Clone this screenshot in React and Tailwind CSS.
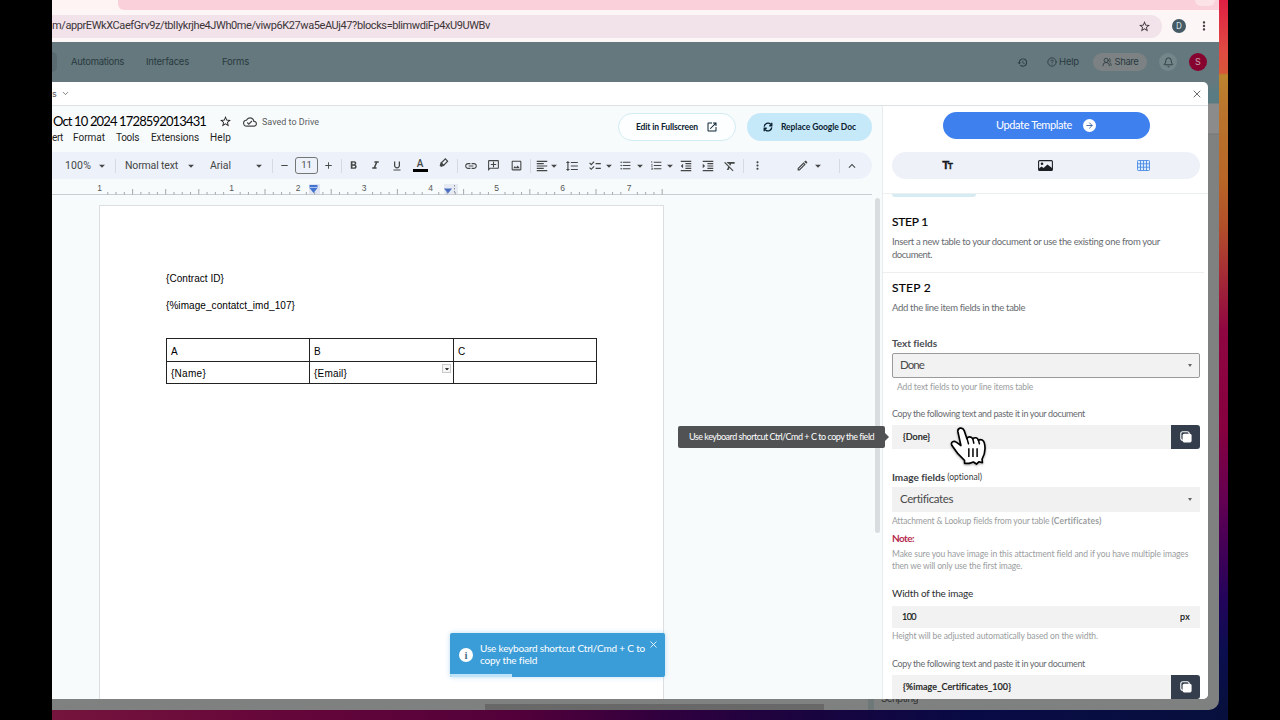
import React, { useLayoutEffect, useRef, useState } from "react";
import {
  MdAdd, MdRemove, MdFormatBold, MdFormatItalic, MdFormatUnderlined, MdInsertLink, MdOutlineAddComment,
  MdOutlineImage, MdFormatAlignLeft, MdFormatLineSpacing, MdChecklist, MdFormatListBulleted,
  MdFormatListNumbered, MdFormatIndentDecrease, MdFormatIndentIncrease, MdFormatClear, MdMoreVert,
  MdOutlineEdit, MdKeyboardArrowUp, MdArrowDropDown, MdStarBorder, MdOutlineCloudDone, MdHistory,
  MdOpenInNew,
} from "react-icons/md";
import { Bell, ChevronDown, CircleHelp, UsersRound, X, ArrowRight } from "lucide-react";

/* A single line of text whose tracking is adjusted so that it spans `w` pixels. */
function Fit({ w, className = "", children }) {
  const ref = useRef(null);
  const [spacing, setSpacing] = useState(0);
  useLayoutEffect(() => {
    const natural = ref.current.getBoundingClientRect().width;
    setSpacing((w - natural) / String(children).length);
  }, [w, children]);
  return (
    <span ref={ref} className={"inline-block shrink-0 whitespace-pre " + className} style={{ letterSpacing: spacing }}>
      {children}
    </span>
  );
}

const Cell = ({ className, children }) => (
  <div className={"flex h-full shrink-0 items-center justify-center " + className}>{children}</div>
);
const Sep = ({ className }) => (
  <Cell className={className}>
    <div className="h-3.5 w-px shrink-0 bg-[#d6dae2]" />
  </Cell>
);
const Drop = ({ className }) => (
  <Cell className={className}>
    <MdArrowDropDown className="size-3.5 shrink-0" />
  </Cell>
);

function BrowserChrome() {
  return (
    <div className="shrink-0">
      <div className="flex h-[10px] bg-[#fff4f4] pl-[66px]">
        <div className="flex flex-1 justify-end rounded-bl-md bg-[#fad1da] pr-1">
          <div className="h-[6px] w-5 rounded-b-full bg-[#fce3e8]" />
        </div>
      </div>
      <div className="flex h-8 items-center bg-[#fdf6f7]">
        <div className="flex h-[23px] w-[1110px] items-center justify-between rounded-r-full bg-[#f1e3e9] pr-[11px] text-[#3d3539]">
          <Fit w={438} className="pt-px font-[Roboto] text-[11px]">m/apprEWkXCaefGrv9z/tblIykrjhe4JWh0me/viwp6K27wa5eAUj47?blocks=blimwdiFp4xU9UWBv</Fit>
          <MdStarBorder className="size-[13px]" />
        </div>
        <div className="ml-[10px] flex size-[14px] items-center justify-center rounded-full bg-[#455a64] text-[8px] text-[#d5e3ea]">D</div>
        <MdMoreVert className="ml-[11px] size-[14px] text-[#463c40]" />
      </div>
    </div>
  );
}

function BaseBar() {
  return (
    <div className="flex h-10 shrink-0 items-center justify-between bg-[#64787d] pr-[12px] font-[Inter] text-[#2a3a40]">
      <div className="flex items-center text-[9.5px]">
        <div className="h-5 w-[5px] rounded-r-full bg-[#5a6c71]" />
        <Fit w={53} className="ml-[14px]">Automations</Fit>
        <Fit w={43} className="ml-[22px]">Interfaces</Fit>
        <Fit w={27} className="ml-[33px]">Forms</Fit>
      </div>
      <div className="flex items-center">
        <MdHistory className="size-[11px]" />
        <CircleHelp className="ml-[19px] size-[10px]" />
        <Fit w={20} className="ml-[2px] pt-px text-[9.5px]">Help</Fit>
        <div className="ml-[14px] flex h-[18px] w-[54px] items-center justify-center gap-[3px] rounded-full bg-[#7c8284]">
          <UsersRound className="size-[10px]" />
          <Fit w={24} className="text-[9.5px]">Share</Fit>
        </div>
        <div className="ml-3 flex size-[18px] items-center justify-center rounded-full bg-[#75868a]">
          <Bell className="size-[11px]" />
        </div>
        <div className="ml-3 flex size-[18px] items-center justify-center rounded-full bg-[#86022f] text-[9px] text-[#c6a2ae]">S</div>
      </div>
    </div>
  );
}

function DocHeader() {
  return (
    <div className="flex h-[46px] shrink-0 justify-between pr-[10px] text-[#1f1f1f]">
      <div>
        <div className="mt-[7px] flex h-[18px] items-center">
          <Fit w={153} className="ml-px font-[Lato] text-[13px] text-black">Oct 10 2024 1728592013431</Fit>
          <MdStarBorder className="mb-[2px] ml-[13px] size-[13px]" />
          <MdOutlineCloudDone className="mb-px ml-[11px] size-[14px] text-[#444746]" />
          <Fit w={57} className="ml-[5px] pt-px font-[Roboto] text-[9px] text-[#5a5d5f]">Saved to Drive</Fit>
        </div>
        <div className="-mt-[2px] flex h-4 items-center font-[Roboto] text-[10px]">
          <Fit w={11}>ert</Fit>
          <Fit w={32} className="ml-[10px]">Format</Fit>
          <Fit w={23} className="ml-[11px]">Tools</Fit>
          <Fit w={48} className="ml-[12px]">Extensions</Fit>
          <Fit w={21} className="ml-[11px]">Help</Fit>
        </div>
      </div>
      <div className="mt-[7px] flex h-[28px] gap-[11px] font-[Lato] text-[8.5px] font-bold text-[#0b2230]">
        <div className="flex w-[118px] items-center justify-center gap-[8px] rounded-full border border-[#d2ecf3] bg-[#fcfeff]">
          <Fit w={62}>Edit in Fullscreen</Fit>
          <MdOpenInNew className="size-[12px]" />
        </div>
        <div className="flex w-[125px] items-center justify-center gap-[8px] rounded-full bg-[#c6e9fa]">
          <svg viewBox="0 0 24 24" className="size-[10px]" fill="none" stroke="currentColor" strokeWidth="3.2">
            <path d="M3 11a9 9 0 0 1 15-6l3 3M21 13a9 9 0 0 1-15 6l-3-3" />
            <path d="M21 2v7h-6M3 22v-7h6" />
          </svg>
          <Fit w={75}>Replace Google Doc</Fit>
        </div>
      </div>
    </div>
  );
}

function Toolbar() {
  return (
    <div className="mr-[10px] flex h-[27px] shrink-0 items-center rounded-r-full bg-[#edf1f9] font-[Roboto] text-[10.5px] text-[#444746]">
      <div className="w-[39px] shrink-0 pl-[13px]"><Fit w={26}>100%</Fit></div>
      <Drop className="w-[22px]" />
      <Sep className="w-1" />
      <div className="w-[65px] shrink-0 pl-2"><Fit w={53}>Normal text</Fit></div>
      <Drop className="w-[18px]" />
      <div className="w-[47px] shrink-0 pl-[10px]"><Fit w={21}>Arial</Fit></div>
      <Drop className="w-6" />
      <Sep className="w-0.5" />
      <Cell className="w-[22px]"><MdRemove className="size-[11px]" /></Cell>
      <div className="flex h-[17px] w-[23px] shrink-0 items-center justify-center rounded-[3px] border border-[#747775] text-[9.5px]">11</div>
      <Cell className="w-5"><MdAdd className="size-[11px]" /></Cell>
      <Sep className="w-1.5" />
      <Cell className="mr-0.5 w-[18px]"><MdFormatBold className="size-[13px] shrink-0" /></Cell>
      <Cell className="w-[22px]"><MdFormatItalic className="size-[13px]" /></Cell>
      <Cell className="w-[22px]"><MdFormatUnderlined className="size-[12px]" /></Cell>
      <Cell className="w-6 flex-col">
        <span className="text-[10px] leading-[10px] font-medium">A</span>
        <span className="h-[2.5px] w-[15px] bg-black" />
      </Cell>
      <Cell className="w-[22px]">
        <svg viewBox="0 0 24 24" className="mb-1 size-[11px]" fill="none" stroke="currentColor" strokeWidth="2.6">
          <path d="M7 11 16 2l5 5-9 9-5-5Z" />
          <path d="m7 11-2 5 2 2 5-2Z" fill="currentColor" />
        </svg>
      </Cell>
      <Sep className="w-1.5" />
      <Cell className="w-[22px]"><MdInsertLink className="size-[14px]" /></Cell>
      <Cell className="w-[22px]"><MdOutlineAddComment className="size-[13px] -scale-x-100" /></Cell>
      <Cell className="ml-px w-[22px]"><MdOutlineImage className="size-[13px]" /></Cell>
      <Sep className="w-1.5" />
      <Cell className="w-[18px]"><MdFormatAlignLeft className="size-[14px] shrink-0" /></Cell>
      <Drop className="w-1.5" />
      <Cell className="ml-1 w-[22px]"><MdFormatLineSpacing className="size-[14px]" /></Cell>
      <Cell className="ml-px w-[22px]"><MdChecklist className="size-[14px]" /></Cell>
      <Drop className="w-1.5" />
      <Cell className="ml-0.5 w-[22px]"><MdFormatListBulleted className="size-[13px]" /></Cell>
      <Drop className="ml-px w-1.5" />
      <Cell className="ml-0.5 w-[22px]"><MdFormatListNumbered className="size-[13px]" /></Cell>
      <Drop className="w-1.5" />
      <Cell className="ml-0.5 w-[22px]"><MdFormatIndentDecrease className="size-[14px]" /></Cell>
      <Cell className="w-[22px]"><MdFormatIndentIncrease className="size-[14px]" /></Cell>
      <Cell className="w-[22px]"><MdFormatClear className="size-[14px]" /></Cell>
      <Sep className="w-1" />
      <Cell className="ml-px w-[22px]"><MdMoreVert className="size-[13px]" /></Cell>
      <Cell className="ml-[23px] w-[22px]"><MdOutlineEdit className="size-[13px]" /></Cell>
      <Drop className="ml-0.5 w-1.5" />
      <Sep className="ml-[15px] w-1.5" />
      <Cell className="w-5"><MdKeyboardArrowUp className="size-[14px]" /></Cell>
    </div>
  );
}

const RULER_LABELS = [[47.5, "1"], [179.5, "1"], [246, "2"], [312, "3"], [378.5, "4"], [444.5, "5"], [510.5, "6"], [577, "7"]];

function Ruler() {
  const ticks = Array.from({ length: 69 }, (_, i) => i).filter((i) => i % 8 !== 0 || i === 8);
  return (
    <svg width="820" height="16" className="shrink-0" fontFamily="Liberation Sans, sans-serif">
      <rect x="257" y="5" width="11" height="10" fill="#e1e6f2" />
      <rect x="392" y="5" width="14" height="10" fill="#e6eaf3" />
      <line x1="0" x2="820" y1="15.5" y2="15.5" stroke="#c9ccd1" />
      {ticks.map((i) => (
        <line key={i} x1={47.5 + i * 8.275} x2={47.5 + i * 8.275} y1={i % 4 === 0 ? 10 : 13} y2="15.5" stroke="#9a9da3" strokeWidth="0.9" />
      ))}
      {RULER_LABELS.map(([x, t], i) => (
        <text key={i} x={x} y="12" fontSize="8.5" textAnchor="middle" fill="#55585a">{t}</text>
      ))}
      <path d="M257.500 6h8v3l-4 5-4-5Z" fill="#4274d0" />
      <path d="M257.500 8.500h8" stroke="#dbe6fa" strokeWidth="0.7" />
      <path d="M392 9.500h8l-4 5Z" fill="#4a6fc0" />
      <path d="M402.500 6v9" stroke="#8a8f98" strokeDasharray="1.500 1.500" />
    </svg>
  );
}

function Page() {
  const cell = "flex items-center border-r border-[#222] pl-1";
  return (
    <div className="ml-[47px] mt-[10px] w-[565px] border border-b-0 border-[#dcdfe2] bg-white pl-[66px] font-['Liberation_Sans'] text-[10px] text-black">
      <div className="mt-[65px] flex h-[14px] items-center"><Fit w={58}>{"{Contract ID}"}</Fit></div>
      <div className="mt-[13px] flex h-[14px] items-center"><Fit w={129}>{"{%image_contatct_imd_107}"}</Fit></div>
      <div className="mt-[26px] grid w-[431px] grid-cols-[143px_144px_143px] grid-rows-[23px_22px] border-t border-l border-[#222]">
        <div className={cell + " border-b pt-[2px]"}>A</div>
        <div className={cell + " border-b pt-[2px]"}>B</div>
        <div className={cell + " border-b pt-[2px]"}>C</div>
        <div className={cell + " border-b pt-[2px]"}><Fit w={35}>{"{Name}"}</Fit></div>
        <div className={cell + " justify-between border-b pt-[2px] pr-0.5"}>
          <Fit w={33}>{"{Email}"}</Fit>
          <div className="mb-[10px] flex size-[9px] items-center justify-center border border-[#c9c9c9] bg-[#f6f6f6]">
            <MdArrowDropDown className="size-[10px] shrink-0" />
          </div>
        </div>
        <div className={cell + " border-b"} />
      </div>
    </div>
  );
}

const SelectBox = ({ w, focused, children }) => (
  <div className={"flex h-[25px] items-center justify-between pr-[7px] pb-px pl-[7px] text-[11.5px] text-[#4a4a4a] " + (focused ? "mt-[3px] rounded-[2px] border border-[#9a9a9a] bg-[#f2f2f2]" : "mt-[2px] border border-[#f1f1f1] bg-[#f1f1f1]")}>
    <Fit w={w}>{children}</Fit>
    <div className="mt-px h-0 w-0 border-x-[2.5px] border-t-[3px] border-x-transparent border-t-[#666]" />
  </div>
);

const CopyField = ({ w, children }) => (
  <div className="mt-[5px] flex h-6 shrink-0 items-center justify-between bg-[#f2f2f2] pl-[11px] text-[9px] font-medium text-[#1d1d1d]">
    <Fit w={w} className="[-webkit-text-stroke:0.2px_#1d1d1d]">{children}</Fit>
    <div className="flex h-6 w-[29px] items-center justify-center rounded-r-[3px] bg-[#333d4b]">
      <svg viewBox="0 0 12 12" className="size-[12px]">
        <rect x="0.800" y="0.800" width="8.400" height="8.400" rx="2" fill="none" stroke="#fff" strokeWidth="1.100" />
        <rect x="2.600" y="2.800" width="9" height="8.600" rx="1.600" fill="#fff" />
      </svg>
    </div>
  </div>
);

function Sidebar() {
  const helper = "flex h-[13px] items-center text-[8.5px] text-[#9a9da0]";
  return (
    <div className="flex w-[326px] shrink-0 flex-col overflow-hidden border-l border-[#e9ecee] bg-white font-[Lato]">
      <div className="flex flex-col items-center border-b border-[#eceff0] pt-[6px] pr-[8px] pb-[14px] pl-[9px]">
        <div className="flex h-[27px] w-[207px] items-center justify-center gap-[11px] rounded-full bg-[#3f80ef] text-[11px] text-white">
          <Fit w={76}>Update Template</Fit>
          <span className="flex size-[13px] items-center justify-center rounded-full bg-white">
            <ArrowRight className="size-[9px] text-[#3b5f9a]" strokeWidth={2.4} />
          </span>
        </div>
        <div className="mt-[13px] flex h-[27px] w-full items-center rounded-full bg-[#eef2f8]">
          <div className="flex w-[112px] items-baseline justify-center font-['Liberation_Sans'] text-[#16191d]">
            <span className="text-[11.5px] leading-none font-bold [-webkit-text-stroke:0.3px_#16191d]">T</span>
            <span className="-ml-[1.5px] text-[8.5px] leading-none font-bold [-webkit-text-stroke:0.3px_#16191d]">T</span>
          </div>
          <div className="flex w-[84px] justify-center">
            <svg viewBox="0 0 15 11" className="h-[11px] w-[15px]">
              <rect x="0.600" y="0.600" width="13.800" height="9.800" rx="1" fill="none" stroke="#1c2024" strokeWidth="1.100" />
              <circle cx="4" cy="3.700" r="1.300" fill="#1c2024" />
              <path d="M1 10V8.500L3.500 6.500 5.500 8 9.500 4.500 14 8v2Z" fill="#1c2024" />
            </svg>
          </div>
          <div className="flex w-[114px] justify-center">
            <svg viewBox="0 0 13 11" className="h-[11px] w-[13px]" fill="#dcebfc" stroke="#4a8ae4" strokeWidth="0.9">
              <rect x="0.500" y="0.500" width="12" height="10" rx="0.800" />
              <path d="M0.500 3.800h12M0.500 7.200h12M3.500.5v10M6.500.5v10M9.500.5v10" />
            </svg>
          </div>
        </div>
      </div>
      <div className="flex flex-col pr-[8px] pl-[9px]">
        <div className="h-[3px] w-[84px] rounded-b-full bg-[#d6ecf2]" />
        <div className="mt-[15px] flex h-5 items-center text-[12px] text-black [-webkit-text-stroke:0.2px_black]"><Fit w={36}>STEP 1</Fit></div>
        <div className="mt-[3px] flex flex-col items-start text-[9.5px] leading-[13px] text-[#686b70]">
          <Fit w={268}>Insert a new table to your document or use the existing one from your</Fit>
          <Fit w={40}>document.</Fit>
        </div>
        <div className="mt-[11px] -mr-1 -ml-[9px] h-px bg-[#eceef0]" />
        <div className="mt-[5px] flex h-5 items-center text-[12px] text-black [-webkit-text-stroke:0.2px_black]"><Fit w={39}>STEP 2</Fit></div>
        <div className="mt-[3px] flex h-[14px] items-center text-[9.5px] text-[#686b70]"><Fit w={133}>Add the line item fields in the table</Fit></div>
        <div className="mt-[21px] flex h-[14px] items-center text-[10px] font-bold text-[#4a4d52]"><Fit w={45}>Text fields</Fit></div>
        <SelectBox focused w={24}>Done</SelectBox>
        <div className={"mt-[3px] pl-[5px] " + helper}><Fit w={136}>Add text fields to your line items table</Fit></div>
        <div className="mt-[13px] flex h-[13px] items-center text-[9px] text-[#686b70]"><Fit w={193}>Copy the following text and paste it in your document</Fit></div>
        <CopyField w={27}>{"{Done}"}</CopyField>
        <div className="mt-[21px] mb-px flex h-[14px] items-center text-[10px] text-[#3a3d42]">
          <Fit w={53} className="font-bold">Image fields</Fit>
          <Fit w={35} className="ml-[2px] pt-px text-[8.5px]">(optional)</Fit>
        </div>
        <SelectBox w={53}>Certificates</SelectBox>
        <div className={"mt-[3px] " + helper}>
          <Fit w={157}>Attachment & Lookup fields from your table</Fit>
          <Fit w={50} className="ml-[2px] font-bold">(Certificates)</Fit>
        </div>
        <div className="mt-[3px] flex h-[14px] items-center text-[10px] font-bold text-[#b5294e]"><Fit w={22}>Note:</Fit></div>
        <div className="mt-[4px] flex flex-col items-start text-[8.5px] leading-[11.5px] text-[#9a9da0]">
          <Fit w={296}>Make sure you have image in this attactment field and if you have multiple images</Fit>
          <Fit w={130}>then we will only use the first image.</Fit>
        </div>
        <div className="mt-[14px] flex h-[14px] items-center text-[10px] text-[#2c2e31]"><Fit w={81}>Width of the image</Fit></div>
        <div className="mt-[6px] flex h-[22px] items-center justify-between bg-[#f2f2f2] pr-[10px] pl-[10px] text-[9px] text-[#111] [-webkit-text-stroke:0.15px_#111]">
          <Fit w={14}>100</Fit>
          <Fit w={10}>px</Fit>
        </div>
        <div className={"mt-[2px] " + helper}><Fit w={206}>Height will be adjusted automatically based on the width.</Fit></div>
        <div className="mt-[14px] flex h-[13px] items-center text-[9px] text-[#686b70]"><Fit w={193}>Copy the following text and paste it in your document</Fit></div>
        <CopyField w={108}>{"{%image_Certificates_100}"}</CopyField>
      </div>
    </div>
  );
}

function Tooltip() {
  return (
    <div className="absolute top-[426px] left-[678px] flex items-center">
      <div className="flex h-[22px] w-[207px] items-center justify-center rounded-[2px] bg-[#505254] font-[Lato] text-[9px] text-white">
        <Fit w={185}>Use keyboard shortcut Ctrl/Cmd + C to copy the field</Fit>
      </div>
      <div className="h-0 w-0 border-y-[4px] border-l-[4px] border-y-transparent border-l-[#505254]" />
    </div>
  );
}

function Toast() {
  return (
    <div className="absolute top-[633px] left-[450px] flex h-11 w-[215px] flex-col justify-between overflow-hidden rounded-[2px] bg-[#3a9dd8] font-[Lato] text-[10px] text-white shadow-[0_0_5px_rgba(58,157,216,0.35)]">
      <div className="flex pt-[10px]">
        <div className="mt-[5px] ml-[9px] flex size-[14px] shrink-0 items-center justify-center rounded-full bg-white font-['Liberation_Serif'] text-[11px] leading-none font-bold text-[#4a6f88]">i</div>
        <div className="ml-[7px] flex w-[165px] flex-col items-start leading-[11.5px]">
          <Fit w={165}>Use keyboard shortcut Ctrl/Cmd + C to</Fit>
          <Fit w={57}>copy the field</Fit>
        </div>
        <X className="-mt-[4px] ml-[3px] size-[11px] shrink-0" strokeWidth={1.8} />
      </div>
      <div className="h-[3px] w-[62px] shrink-0 bg-[#c0e4f7]" />
    </div>
  );
}

function HandCursor() {
  return (
    <svg viewBox="835 75 125 130" className="absolute top-[425px] left-[948px] h-[43px] w-[42px] drop-shadow-[0_1px_1px_rgba(0,0,0,0.35)]">
      <path
        d="M884 191v-9c-13-11-27-27-38-45-5-10 5-16 13-10l14 10-9-41c-2-13 14-16 19-4l8 24c4-7 14-7 18 1 6-6 14-4 17 4 8-4 16 0 18 9 4 17 2 33-7 48l1 11-10-3-8 7-9-6-13 4Z"
        fill="#fff" stroke="#000" strokeWidth="5" strokeLinejoin="round"
      />
      <path d="M891 114l5 18M909 117l3 13M926 121l3 11" stroke="#000" strokeWidth="4.500" strokeLinecap="round" />
      <path d="M897 145v27M909.500 145v27M922 145v27" stroke="#000" strokeWidth="4.500" />
    </svg>
  );
}

export default function App() {
  return (
    <div className="relative h-[720px] w-[1280px] overflow-hidden bg-black px-[52px]">
      <div className="h-[720px] w-[1176px] bg-[linear-gradient(90deg,#75143c_0%,#65063a_20%,#52003a_40%,#30003e_52%,#18043f_65%,#080a45_78%,#07103d_100%)]">
        <div className="h-[710px] bg-[linear-gradient(180deg,#df1f43_0px,#e04a42_50px,#d65638_73px,#bd842e_75px,#b9742d_110px,#b76627_180px,#b25029_225px,#a52b36_275px,#8f0641_330px,#86003f_430px,#630052_500px,#480055_540px,#22045b_600px,#0b0e4f_650px,#07103d_710px)] pr-[9px]">
          <div className="flex h-[710px] flex-col overflow-hidden rounded-br-[10px] bg-[#7f8180]">
            <BrowserChrome />
            <BaseBar />
            <div className="flex h-[617px] shrink-0 bg-[linear-gradient(180deg,#64787d_0px,#5a7b82_10px,#5a7b82_21px,#8b8b8b_22px,#8b8b8b_51px,#777777_52px,#7f8080_53px)]">
              <div className="flex w-[1156px] flex-col overflow-hidden rounded-r-[5px] bg-white">
                <div className="flex h-6 shrink-0 items-center border-b border-[#dfe2e5] pr-[5px] font-[Inter] text-[9px] text-[#55585c]">
                  <span>s</span>
                  <ChevronDown className="ml-[4px] size-[9px]" />
                  <X className="ml-auto size-[12px] text-[#444]" strokeWidth={1.6} />
                </div>
                <div className="flex min-h-0 flex-1">
                  <div className="flex w-[830px] flex-col overflow-hidden bg-[#f8fbfc]">
                    <DocHeader />
                    <Toolbar />
                    <Ruler />
                    <div className="flex min-h-0 flex-1 items-stretch">
                      <Page />
                      <div className="mt-[3px] mr-[2px] ml-auto h-[335px] w-[5px] rounded-full bg-[#d9dde0]" />
                    </div>
                  </div>
                  <Sidebar />
                </div>
              </div>
            </div>
            <div className="flex h-[11px] items-end">
              <div className="ml-[433px] h-[6px] w-[339px] bg-[#686868]" />
              <div className="ml-[44px] h-[11px] w-1.5 bg-[#6f7878]" />
              <div className="flex h-[11px] flex-col justify-end overflow-hidden pb-[6px] pl-[7px] font-[Inter] text-[10px] leading-[11px] text-[#333]">
                <Fit w={37}>Scripting</Fit>
              </div>
            </div>
          </div>
        </div>
      </div>
      <Tooltip />
      <Toast />
      <HandCursor />
    </div>
  );
}
